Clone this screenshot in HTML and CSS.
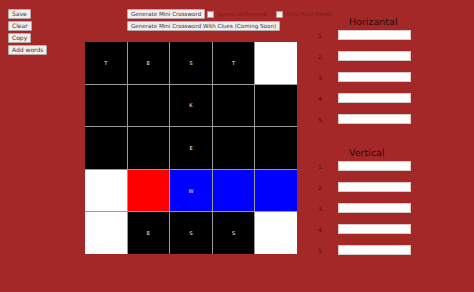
FILE: index.html
```html
<!DOCTYPE html>
<html>
<head>
<meta charset="utf-8">
<link rel="stylesheet" href="styles.css">
</head>
<body>
<div class="page">
  <div class="tools">
    <button class="btn">Save</button>
    <button class="btn">Clear</button>
    <button class="btn">Copy</button>
    <button class="btn">Add words</button>
  </div>
  <div class="main">
    <div class="controls">
      <div class="row">
        <button class="btn small">Generate Mini Crossword</button>
        <label class="opt"><span class="box"></span>Ignore Unfinished</label>
        <label class="opt"><span class="box"></span>Only Real Words</label>
      </div>
      <div class="row">
        <button class="btn small">Generate Mini Crossword With Clues (Coming Soon)</button>
      </div>
    </div>
    <div class="grid">
      <div class="cell b">T</div><div class="cell b">E</div><div class="cell b">S</div><div class="cell b">T</div><div class="cell w"></div>
      <div class="cell b"></div><div class="cell b"></div><div class="cell b">K</div><div class="cell b"></div><div class="cell b"></div>
      <div class="cell b"></div><div class="cell b"></div><div class="cell b">E</div><div class="cell b"></div><div class="cell b"></div>
      <div class="cell w"></div><div class="cell r"></div><div class="cell u">W</div><div class="cell u"></div><div class="cell u"></div>
      <div class="cell w"></div><div class="cell b">E</div><div class="cell b">S</div><div class="cell b">S</div><div class="cell w"></div>
    </div>
  </div>
  <div class="clues">
    <div class="title">Horizantal</div>
    <div class="list">
      <div class="clue"><span class="num">1.</span><span class="field"></span></div>
      <div class="clue"><span class="num">2.</span><span class="field"></span></div>
      <div class="clue"><span class="num">3.</span><span class="field"></span></div>
      <div class="clue"><span class="num">4.</span><span class="field"></span></div>
      <div class="clue"><span class="num">5.</span><span class="field"></span></div>
    </div>
    <div class="title vertical">Vertical</div>
    <div class="list">
      <div class="clue"><span class="num">1.</span><span class="field"></span></div>
      <div class="clue"><span class="num">2.</span><span class="field"></span></div>
      <div class="clue"><span class="num">3.</span><span class="field"></span></div>
      <div class="clue"><span class="num">4.</span><span class="field"></span></div>
      <div class="clue"><span class="num">5.</span><span class="field"></span></div>
    </div>
  </div>
</div>
</body>
</html>
```
FILE: styles.css
```css
html, body {
  margin: 0;
  padding: 0;
  background: #a52828;
  font-family: "DejaVu Sans", sans-serif;
}
.page {
  display: flex;
  align-items: flex-start;
  padding: 9px 0 0 8px;
  height: 283px;
  box-sizing: content-box;
}
.btn {
  font-family: "DejaVu Sans", sans-serif;
  font-size: 6px;
  line-height: 8px;
  height: 10px;
  padding: 0 3px;
  margin: 0;
  background: #f0eeee;
  color: #333;
  border: 1px solid #b9a9a9;
  border-radius: 1px;
  white-space: nowrap;
  box-sizing: border-box;
}
.btn.small {
  font-size: 5.6px;
}
.tools {
  width: 77px;
  display: flex;
  flex-direction: column;
  align-items: flex-start;
  gap: 2px;
}
.main {
  width: 212px;
  display: flex;
  flex-direction: column;
}
.controls {
  margin-left: 42px;
  display: flex;
  flex-direction: column;
  gap: 2px;
  white-space: nowrap;
}
.row {
  display: flex;
  align-items: center;
  height: 10px;
}
.opt {
  display: flex;
  align-items: center;
  font-size: 5.5px;
  color: #7e1a1a;
  margin-left: 2px;
  white-space: nowrap;
}
.box {
  width: 7px;
  height: 7px;
  background: #f2f0f0;
  border: 1px solid #b99;
  box-sizing: border-box;
  margin-right: 4px;
}
.opt + .opt {
  margin-left: 9px;
}
.grid {
  margin-top: 11px;
  width: 212px;
  height: 212px;
  display: grid;
  grid-template-columns: repeat(5, 1fr);
  grid-template-rows: repeat(5, 1fr);
  gap: 1px;
  background: #9a9a9a;
}
.cell {
  display: flex;
  align-items: center;
  justify-content: center;
  color: #fff;
  font-size: 5px;
}
.b { background: #000; }
.w { background: #fff; }
.r { background: #ff0000; }
.u { background: #0000ff; }
.clues {
  margin-left: 21px;
  margin-top: 7px;
  width: 93px;
  display: flex;
  flex-direction: column;
}
.title {
  font-size: 9.5px;
  line-height: 12px;
  height: 12px;
  color: #2a0808;
  text-align: left;
  padding-left: 31px;
  margin-bottom: 2px;
}
.vertical {
  margin-top: 23px;
}
.list {
  display: flex;
  flex-direction: column;
  gap: 11px;
}
.clue {
  display: flex;
  align-items: center;
  height: 10px;
}
.num {
  width: 20px;
  font-size: 6px;
  color: #5a0c0c;
}
.field {
  width: 73px;
  height: 10px;
  background: #fff;
  border: 1px solid #d8c8c8;
  box-sizing: border-box;
}
```
